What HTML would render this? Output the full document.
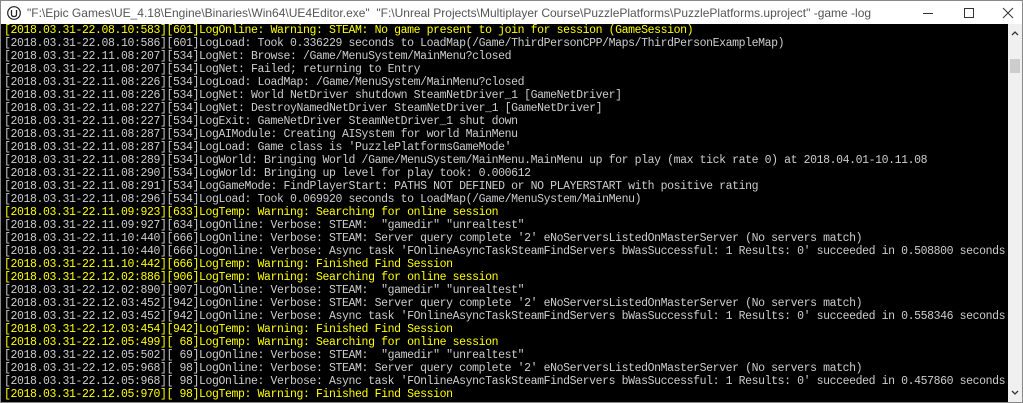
<!DOCTYPE html>
<html><head><meta charset="utf-8"><style>
html,body{margin:0;padding:0;width:1023px;height:403px;overflow:hidden;background:#fff}
#win{position:absolute;left:0;top:0;width:1021px;height:401px;border:1px solid #888;background:#fff}
#title{position:absolute;left:0;top:0;width:1021px;height:23px;background:#fff;font:12px "Liberation Sans",sans-serif;color:#555}
#title .t{position:absolute;left:26px;top:5px;white-space:pre}
#con{position:absolute;left:0;top:23px;width:1007px;height:378px;background:#000;overflow:hidden}
#txt{position:absolute;left:3px;top:0px;font-family:"Liberation Mono",monospace;font-size:11.5px;letter-spacing:-0.4px;color:#cccccc}
#txt div{height:13px;line-height:13px;white-space:pre}
.y{color:#ffff00}
#sb{position:absolute;left:1007px;top:23px;width:14px;height:378px;background:#f0f0f0}
#thumb{position:absolute;left:2px;top:35px;width:10px;height:14px;background:#cdcdcd}
</style></head><body><div id="win">
<div id="title">
<svg style="position:absolute;left:6px;top:5px" width="14" height="14" viewBox="0 0 14 14"><circle cx="7" cy="7" r="6.3" fill="none" stroke="#222" stroke-width="1.2"/><path d="M4.5 4v4.5c0 1.5 1 2 2.5 2s2.5-.5 2.5-2V4" fill="none" stroke="#222" stroke-width="1.3"/></svg>
<span class="t">"F:\Epic Games\UE_4.18\Engine\Binaries\Win64\UE4Editor.exe"  "F:\Unreal Projects\Multiplayer Course\PuzzlePlatforms\PuzzlePlatforms.uproject" -game -log</span>
<svg style="position:absolute;left:920px;top:6px" width="14" height="12"><line x1="2" y1="6.5" x2="12" y2="6.5" stroke="#333"/></svg>
<svg style="position:absolute;left:962px;top:6px" width="12" height="12"><rect x="1.5" y="1.5" width="9" height="9" fill="none" stroke="#333"/></svg>
<svg style="position:absolute;left:1001px;top:6px" width="12" height="12"><path d="M1 1L11 11M11 1L1 11" stroke="#333"/></svg>
</div>
<div id="con"><div id="txt">
<div class="y">[2018.03.31-22.08.10:583][601]LogOnline: Warning: STEAM: No game present to join for session (GameSession)</div>
<div>[2018.03.31-22.08.10:586][601]LogLoad: Took 0.336229 seconds to LoadMap(/Game/ThirdPersonCPP/Maps/ThirdPersonExampleMap)</div>
<div>[2018.03.31-22.11.08:207][534]LogNet: Browse: /Game/MenuSystem/MainMenu?closed</div>
<div>[2018.03.31-22.11.08:207][534]LogNet: Failed; returning to Entry</div>
<div>[2018.03.31-22.11.08:226][534]LogLoad: LoadMap: /Game/MenuSystem/MainMenu?closed</div>
<div>[2018.03.31-22.11.08:226][534]LogNet: World NetDriver shutdown SteamNetDriver_1 [GameNetDriver]</div>
<div>[2018.03.31-22.11.08:227][534]LogNet: DestroyNamedNetDriver SteamNetDriver_1 [GameNetDriver]</div>
<div>[2018.03.31-22.11.08:227][534]LogExit: GameNetDriver SteamNetDriver_1 shut down</div>
<div>[2018.03.31-22.11.08:287][534]LogAIModule: Creating AISystem for world MainMenu</div>
<div>[2018.03.31-22.11.08:287][534]LogLoad: Game class is 'PuzzlePlatformsGameMode'</div>
<div>[2018.03.31-22.11.08:289][534]LogWorld: Bringing World /Game/MenuSystem/MainMenu.MainMenu up for play (max tick rate 0) at 2018.04.01-10.11.08</div>
<div>[2018.03.31-22.11.08:290][534]LogWorld: Bringing up level for play took: 0.000612</div>
<div>[2018.03.31-22.11.08:291][534]LogGameMode: FindPlayerStart: PATHS NOT DEFINED or NO PLAYERSTART with positive rating</div>
<div>[2018.03.31-22.11.08:296][534]LogLoad: Took 0.069920 seconds to LoadMap(/Game/MenuSystem/MainMenu)</div>
<div class="y">[2018.03.31-22.11.09:923][633]LogTemp: Warning: Searching for online session</div>
<div>[2018.03.31-22.11.09:927][634]LogOnline: Verbose: STEAM:  "gamedir" "unrealtest"</div>
<div>[2018.03.31-22.11.10:440][666]LogOnline: Verbose: STEAM: Server query complete '2' eNoServersListedOnMasterServer (No servers match)</div>
<div>[2018.03.31-22.11.10:440][666]LogOnline: Verbose: Async task 'FOnlineAsyncTaskSteamFindServers bWasSuccessful: 1 Results: 0' succeeded in 0.508800 seconds</div>
<div class="y">[2018.03.31-22.11.10:442][666]LogTemp: Warning: Finished Find Session</div>
<div class="y">[2018.03.31-22.12.02:886][906]LogTemp: Warning: Searching for online session</div>
<div>[2018.03.31-22.12.02:890][907]LogOnline: Verbose: STEAM:  "gamedir" "unrealtest"</div>
<div>[2018.03.31-22.12.03:452][942]LogOnline: Verbose: STEAM: Server query complete '2' eNoServersListedOnMasterServer (No servers match)</div>
<div>[2018.03.31-22.12.03:452][942]LogOnline: Verbose: Async task 'FOnlineAsyncTaskSteamFindServers bWasSuccessful: 1 Results: 0' succeeded in 0.558346 seconds</div>
<div class="y">[2018.03.31-22.12.03:454][942]LogTemp: Warning: Finished Find Session</div>
<div class="y">[2018.03.31-22.12.05:499][ 68]LogTemp: Warning: Searching for online session</div>
<div>[2018.03.31-22.12.05:502][ 69]LogOnline: Verbose: STEAM:  "gamedir" "unrealtest"</div>
<div>[2018.03.31-22.12.05:968][ 98]LogOnline: Verbose: STEAM: Server query complete '2' eNoServersListedOnMasterServer (No servers match)</div>
<div>[2018.03.31-22.12.05:968][ 98]LogOnline: Verbose: Async task 'FOnlineAsyncTaskSteamFindServers bWasSuccessful: 1 Results: 0' succeeded in 0.457860 seconds</div>
<div class="y">[2018.03.31-22.12.05:970][ 98]LogTemp: Warning: Finished Find Session</div>
</div></div>
<div id="sb">
<svg style="position:absolute;left:3px;top:6px" width="8" height="6"><path d="M1 5L4 2L7 5" fill="none" stroke="#333" stroke-width="1.3"/></svg>
<div id="thumb"></div>
<svg style="position:absolute;left:3px;top:366px" width="8" height="6"><path d="M1 1L4 4L7 1" fill="none" stroke="#333" stroke-width="1.3"/></svg>
</div>
</div></body></html>
